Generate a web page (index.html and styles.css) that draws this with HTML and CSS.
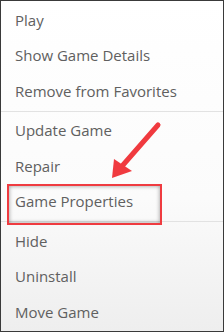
FILE: index.html
```html
<!DOCTYPE html>
<html lang="en">
<head>
    <meta charset="UTF-8">
    <meta name="viewport" content="width=device-width, initial-scale=1.0">
    <title>Game Menu</title>
    <link rel="stylesheet" href="styles.css">
</head>
<body>
    <div class="menu">
        <div class="group">
            <div class="item">Play</div>
            <div class="item">Show Game Details</div>
            <div class="item">Remove from Favorites</div>
        </div>
        <div class="group">
            <div class="item">Update Game</div>
            <div class="item">Repair</div>
            <div class="item marked">Game Properties</div>
        </div>
        <div class="group">
            <div class="item">Hide</div>
            <div class="item">Uninstall</div>
            <div class="item">Move Game</div>
        </div>

        <!-- annotation arrow -->
        <svg class="arrow" width="224" height="332" viewBox="0 0 224 332">
            <line x1="158" y1="125" x2="123" y2="165" stroke="#f03a3f" stroke-width="5" stroke-linecap="round"/>
            <polygon points="112,178 114,159 132,171" fill="#f03a3f"/>
        </svg>
    </div>
</body>
</html>
```

FILE: styles.css
```css
* {
    margin: 0;
    padding: 0;
    box-sizing: border-box;
}
body {
    font-family: "Open Sans", sans-serif;
    background-color: #fff;
}
.menu {
    position: relative;
    width: 224px;
    height: 332px;
    border: 1px solid #3a3a3a;
    background: linear-gradient(to bottom, #ffffff 0%, #fbfbfb 60%, #eeeeee 100%);
    overflow: hidden;
}
.group {
    padding: 1px 0 2px;
    border-bottom: 1px solid #e2e2e2;
}
.group:last-child {
    border-bottom: none;
}
.item {
    position: relative;
    height: 35.5px;
    display: flex;
    align-items: center;
    padding-left: 14px;
    font-size: 15px;
    color: #606060;
}
.item.marked:after {
    content: '';
    position: absolute;
    left: 6px;
    top: 0;
    width: 151px;
    height: 37px;
    border: 2px solid #ef3b40;
    box-shadow: inset 0 0 4px rgba(0,0,0,0.4);
}
.arrow {
    position: absolute;
    left: -1px;
    top: -1px;
}
```
